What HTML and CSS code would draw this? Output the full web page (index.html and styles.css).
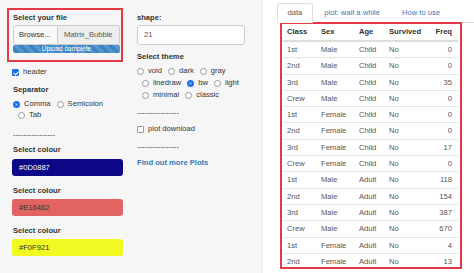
FILE: index.html
```html
<!DOCTYPE html>
<html lang="en">

<head>
    <meta charset="UTF-8">
    <title>Matrix Bubble</title>
    <link rel="stylesheet" href="styles.css">
</head>

<body>
    <div class="page">
        <div class="sidebar">
            <div class="col-left">
                <div class="file-box">
                    <div class="label">Select your file</div>
                    <div class="file-row">
                        <span class="browse">Browse...</span>
                        <span class="file-name">Matrix_Bubble</span>
                    </div>
                    <div class="progress">Upload complete</div>
                </div>

                <div class="check-row header-check">
                    <span class="checkbox checked"></span>header
                </div>

                <div class="label sep-label">Separator</div>
                <div class="radio-row sep-row1">
                    <span class="radio checked"></span>Comma
                    <span class="radio gap"></span>Semicolon
                </div>
                <div class="radio-row sep-row2">
                    <span class="radio"></span>Tab
                </div>

                <div class="dashes left-dashes">----------------</div>

                <div class="label colour-label first">Select colour</div>
                <div class="colour navy">#0D0887</div>
                <div class="label colour-label">Select colour</div>
                <div class="colour coral">#E16462</div>
                <div class="label colour-label">Select colour</div>
                <div class="colour yellow">#F0F921</div>
            </div>

            <div class="col-mid">
                <div class="label shape-label">shape:</div>
                <div class="text-input">21</div>

                <div class="label theme-label">Select theme</div>
                <div class="radio-row theme-row1">
                    <span class="radio"></span>void
                    <span class="radio gap"></span>dark
                    <span class="radio gap"></span>gray
                </div>
                <div class="radio-row theme-row2">
                    <span class="radio"></span>linedraw
                    <span class="radio gap checked"></span>bw
                    <span class="radio gap"></span>light
                </div>
                <div class="radio-row theme-row3">
                    <span class="radio"></span>minimal
                    <span class="radio gap"></span>classic
                </div>

                <div class="dashes mid-dashes1">----------------</div>
                <div class="check-row plot-check">
                    <span class="checkbox"></span>plot download
                </div>
                <div class="dashes mid-dashes2">----------------</div>

                <a class="more-link" href="#">Find out more Plots</a>
            </div>
        </div>

        <div class="main">
            <ul class="tabs">
                <li class="tab active">data</li>
                <li class="tab">plot: wait a while</li>
                <li class="tab">How to use</li>
            </ul>

            <div class="table-box">
                <table class="data-table">
                    <colgroup>
                        <col style="width: 34px">
                        <col style="width: 38px">
                        <col style="width: 30px">
                        <col style="width: 45px">
                        <col>
                    </colgroup>
                    <thead>
                        <tr><th>Class</th><th>Sex</th><th>Age</th><th>Survived</th><th class="num">Freq</th></tr>
                    </thead>
                    <tbody>
                        <tr><td>1st</td><td>Male</td><td>Child</td><td>No</td><td class="num">0</td></tr>
                        <tr><td>2nd</td><td>Male</td><td>Child</td><td>No</td><td class="num">0</td></tr>
                        <tr><td>3rd</td><td>Male</td><td>Child</td><td>No</td><td class="num">35</td></tr>
                        <tr><td>Crew</td><td>Male</td><td>Child</td><td>No</td><td class="num">0</td></tr>
                        <tr><td>1st</td><td>Female</td><td>Child</td><td>No</td><td class="num">0</td></tr>
                        <tr><td>2nd</td><td>Female</td><td>Child</td><td>No</td><td class="num">0</td></tr>
                        <tr><td>3rd</td><td>Female</td><td>Child</td><td>No</td><td class="num">17</td></tr>
                        <tr><td>Crew</td><td>Female</td><td>Child</td><td>No</td><td class="num">0</td></tr>
                        <tr><td>1st</td><td>Male</td><td>Adult</td><td>No</td><td class="num">118</td></tr>
                        <tr><td>2nd</td><td>Male</td><td>Adult</td><td>No</td><td class="num">154</td></tr>
                        <tr><td>3rd</td><td>Male</td><td>Adult</td><td>No</td><td class="num">387</td></tr>
                        <tr><td>Crew</td><td>Male</td><td>Adult</td><td>No</td><td class="num">670</td></tr>
                        <tr><td>1st</td><td>Female</td><td>Adult</td><td>No</td><td class="num">4</td></tr>
                        <tr><td>2nd</td><td>Female</td><td>Adult</td><td>No</td><td class="num">13</td></tr>
                    </tbody>
                </table>
            </div>
        </div>
    </div>
</body>

</html>
```

FILE: styles.css
```css
body {
    margin: 0;
    font-family: "Liberation Sans", Arial, sans-serif;
    font-size: 7.6px;
    color: #333;
    background: #fff;
    overflow: hidden;
}

.page {
    display: flex;
    height: 273px;
}

/* sidebar well */
.sidebar {
    width: 263px;
    box-sizing: border-box;
    display: flex;
    padding: 8px 0 0 7px;
    background: #f6f6f6;
    border-right: 1px solid #ececec;
}

.col-left {
    width: 116px;
}

.col-mid {
    width: 110px;
    margin-left: 14px;
}

.label {
    font-weight: bold;
    line-height: 10px;
    color: #333;
}

/* file upload */
.file-box {
    height: 54px;
    box-sizing: border-box;
    border: 2px solid #e53945;
    padding: 3px 1px 7px 4px;
}

.file-row {
    display: flex;
    height: 20px;
    margin-top: 2px;
}

.browse {
    width: 45px;
    box-sizing: border-box;
    border: 1px solid #ccc;
    border-radius: 3px 0 0 3px;
    background: #f8f8f8;
    line-height: 18px;
    padding-left: 5px;
    color: #333;
}

.file-name {
    flex: 1;
    border: 1px solid #ccc;
    border-left: none;
    border-radius: 0 3px 3px 0;
    background: #eee;
    line-height: 18px;
    padding-left: 6px;
    color: #555;
    overflow: hidden;
    white-space: nowrap;
}

.progress {
    height: 8px;
    line-height: 8px;
    font-size: 6.6px;
    text-align: center;
    color: #fff;
    border-radius: 2px;
    background-color: #3a83c4;
    background-image: linear-gradient(45deg, rgba(255, 255, 255, .15) 25%, transparent 25%, transparent 50%, rgba(255, 255, 255, .15) 50%, rgba(255, 255, 255, .15) 75%, transparent 75%, transparent);
    background-size: 10px 10px;
}

/* checkboxes and radios */
.check-row,
.radio-row {
    display: flex;
    align-items: center;
    line-height: 10px;
    color: #333;
}

.checkbox {
    width: 7px;
    height: 7px;
    box-sizing: border-box;
    border: 1px solid #999;
    border-radius: 1px;
    background: #fff;
    margin-right: 4px;
    position: relative;
}

.checkbox.checked {
    background: #1a73e8;
    border-color: #1a73e8;
}

.checkbox.checked::after {
    content: "";
    position: absolute;
    left: 1.5px;
    top: 0;
    width: 1.5px;
    height: 3.5px;
    border: solid #fff;
    border-width: 0 1.2px 1.2px 0;
    transform: rotate(45deg);
}

.radio {
    width: 7px;
    height: 7px;
    box-sizing: border-box;
    border: 1px solid #999;
    border-radius: 50%;
    background: #fff;
    margin-right: 4px;
}

.radio.gap {
    margin-left: 6px;
}

.radio.checked {
    background: #fff;
    border: 2px solid #1a73e8;
    box-shadow: inset 0 0 0 1px #1a73e8;
}

.header-check {
    margin-top: 5px;
    padding-left: 5px;
}

.sep-label {
    margin-top: 8px;
    padding-left: 6px;
}

.sep-row1 {
    margin-top: 4px;
    padding-left: 6px;
}

.sep-row2 {
    margin-top: 1px;
    padding-left: 11px;
}

.dashes {
    line-height: 10px;
    color: #333;
    letter-spacing: 0.1px;
}

.left-dashes {
    margin-top: 10px;
    padding-left: 6px;
}

.colour-label {
    margin-top: 10px;
    padding-left: 6px;
}

.colour-label.first {
    margin-top: 5px;
}

.colour {
    height: 17px;
    line-height: 17px;
    margin-top: 3px;
    margin-left: 5px;
    padding-left: 7px;
    border-radius: 3px;
    color: #333;
}

.navy {
    margin-top: 4px;
    background: #0D0887;
    color: #fff;
}

.coral {
    background: #E16462;
}

.yellow {
    background: #F0F921;
}

/* middle column */
.shape-label {
    margin-top: 5px;
}

.text-input {
    width: 108px;
    height: 20px;
    margin-top: 2px;
    box-sizing: border-box;
    border: 1px solid #ccc;
    border-radius: 3px;
    background: #fff;
    line-height: 18px;
    padding-left: 6px;
    color: #555;
}

.theme-label {
    margin-top: 7px;
}

.theme-row1 {
    margin-top: 4px;
}

.theme-row2 {
    margin-top: 2px;
    padding-left: 5px;
}

.theme-row3 {
    margin-top: 2px;
    padding-left: 5px;
}

.mid-dashes1 {
    margin-top: 8px;
}

.plot-check {
    margin-top: 6px;
}

.mid-dashes2 {
    margin-top: 8px;
}

.more-link {
    display: block;
    margin-top: 6px;
    line-height: 10px;
    font-weight: bold;
    color: #337ab7;
    text-decoration: none;
}

/* main panel */
.main {
    flex: 1;
    padding-left: 14px;
}

.tabs {
    display: flex;
    list-style: none;
    margin: 3px 0 0 0;
    padding: 0;
    border-bottom: 1px solid #ddd;
}

.tab {
    padding: 0 9.5px;
    margin-right: 1px;
    margin-bottom: -1px;
    line-height: 18px;
    color: #337ab7;
    border: 1px solid transparent;
    border-radius: 3px 3px 0 0;
}

.tab.active {
    color: #555;
    background: #fff;
    border-color: #ddd;
    border-bottom-color: #fff;
}

.table-box {
    width: 182px;
    height: 247px;
    box-sizing: border-box;
    margin-left: 3px;
    margin-top: -1px;
    border: 2px solid #e53945;
    padding: 0 2px 0 1px;
    overflow: hidden;
}

.data-table {
    width: 100%;
    border-collapse: collapse;
    table-layout: fixed;
}

.data-table th {
    text-align: left;
    font-weight: bold;
    color: #333;
    line-height: 16px;
    padding: 0 0 0 4px;
    border-bottom: 2px solid #ddd;
    white-space: nowrap;
}

.data-table td {
    line-height: 15.3px;
    padding: 0 0 0 4px;
    border-top: 1px solid #e4e4e4;
    color: #555;
    white-space: nowrap;
}

.data-table .num {
    text-align: right;
    padding-right: 6px;
}
```
